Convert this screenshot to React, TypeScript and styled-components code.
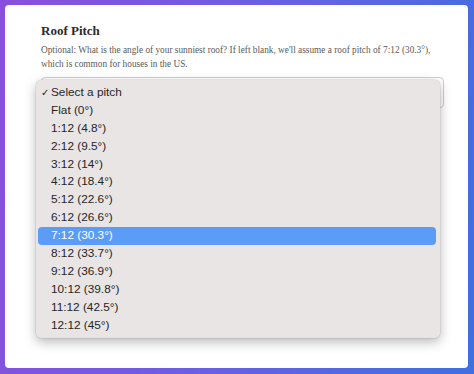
import React from 'react';
import styled, { createGlobalStyle } from 'styled-components';

const GlobalStyle = createGlobalStyle`
  html, body {
    margin: 0;
    padding: 0;
    height: 100%;
  }
  #root {
    height: 100%;
  }
`;

const Backdrop = styled.div`
  box-sizing: border-box;
  height: 100vh;
  padding: 5px 6px 6px 5px;
  background: linear-gradient(100deg, #8a4fdc 0%, #6a5fe2 50%, #3f6fe0 100%);
  display: flex;
`;

const Card = styled.div`
  flex: 1;
  background: #fff;
  border-radius: 4px;
  padding: 17px 24px 0 36px;
  display: flex;
  flex-direction: column;
`;

const Title = styled.h2`
  margin: 0;
  font-family: 'Liberation Serif', serif;
  font-weight: bold;
  font-size: 13px;
  line-height: 17px;
  color: #2b2b2b;
`;

const Hint = styled.p`
  margin: 4px 0 0;
  font-family: 'Liberation Serif', serif;
  font-size: 9.3px;
  line-height: 14px;
  color: #5a5a5a;
`;

const SelectWrap = styled.div`
  position: relative;
  margin-top: 6px;
  width: 403px;
`;

const SelectBox = styled.div`
  box-sizing: border-box;
  height: 31px;
  border: 1px solid #cfcfcf;
  border-radius: 4px;
  background: #fff;
`;

const Menu = styled.ul`
  position: absolute;
  top: 3px;
  left: -5px;
  box-sizing: border-box;
  width: 404px;
  margin: 0;
  padding: 4px 4px 4px 2px;
  list-style: none;
  background: #e9e5e4;
  border-radius: 5px;
  box-shadow: 0 4px 12px rgba(0, 0, 0, 0.28), 0 0 0 0.5px rgba(0, 0, 0, 0.12);
`;

const Option = styled.li<{ $active?: boolean }>`
  position: relative;
  height: 17.9px;
  line-height: 17.9px;
  padding-left: 13px;
  border-radius: 4px;
  font-family: 'Liberation Sans', Arial, sans-serif;
  font-size: 11.8px;
  color: ${(p) => (p.$active ? '#fff' : '#262626')};
  background: ${(p) => (p.$active ? '#5b9cf7' : 'transparent')};
`;

const Check = styled.span`
  position: absolute;
  left: 3px;
  top: 0;
  font-size: 10px;
`;

const options = [
  'Flat (0°)',
  '1:12 (4.8°)',
  '2:12 (9.5°)',
  '3:12 (14°)',
  '4:12 (18.4°)',
  '5:12 (22.6°)',
  '6:12 (26.6°)',
  '7:12 (30.3°)',
  '8:12 (33.7°)',
  '9:12 (36.9°)',
  '10:12 (39.8°)',
  '11:12 (42.5°)',
  '12:12 (45°)',
];

export default function App() {
  return (
    <>
      <GlobalStyle />
      <Backdrop>
        <Card>
          <Title>Roof Pitch</Title>
          <Hint>
            Optional: What is the angle of your sunniest roof? If left blank, we'll assume a roof pitch of 7:12 (30.3°),
            <br />
            which is common for houses in the US.
          </Hint>
          <SelectWrap>
            <SelectBox />
            <Menu>
              <Option>
                <Check>✓</Check>Select a pitch
              </Option>
              {options.map((o) => (
                <Option key={o} $active={o.startsWith('7:12')}>
                  {o}
                </Option>
              ))}
            </Menu>
          </SelectWrap>
        </Card>
      </Backdrop>
    </>
  );
}
